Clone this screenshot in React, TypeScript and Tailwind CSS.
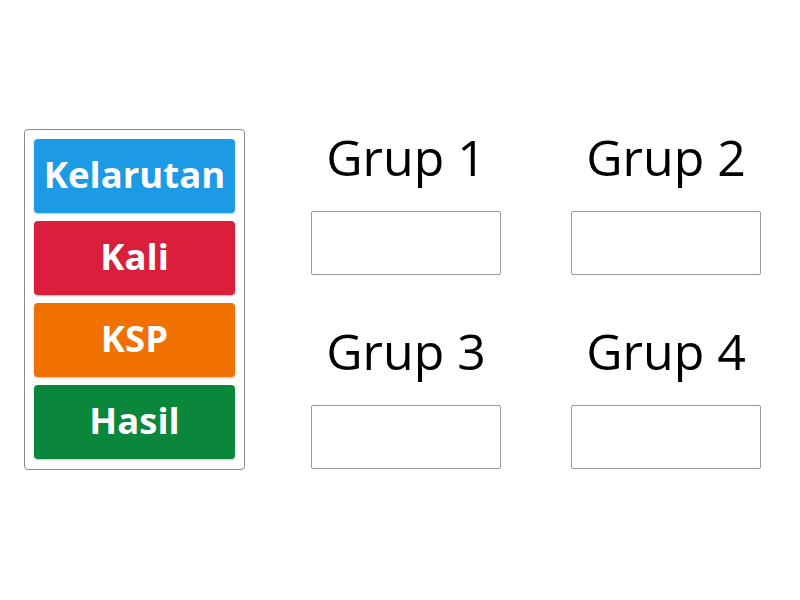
import React from 'react';

const ITEMS = [
  { label: 'Kelarutan', color: 'bg-[#1c9be4]' },
  { label: 'Kali', color: 'bg-[#d91f3b]' },
  { label: 'KSP', color: 'bg-[#f07000]' },
  { label: 'Hasil', color: 'bg-[#0b873c]' },
];

const GROUPS = ['Grup 1', 'Grup 2', 'Grup 3', 'Grup 4'];

export default function App() {
  return (
    <div
      className="w-[800px] h-[600px] bg-white flex items-start pt-[129px] pl-[24px]"
      style={{ fontFamily: '"Open Sans", sans-serif' }}
    >
      {/* Item tray */}
      <div className="w-[221px] h-[341px] border border-[#8a8a8a] rounded-[4px] p-[9px] flex flex-col gap-[8px]">
        {ITEMS.map((it) => (
          <div
            key={it.label}
            className={`${it.color} h-[74px] pb-[4px] rounded-[4px] shadow-[0_1px_2px_rgba(0,0,0,0.25)] flex items-center justify-center text-white font-bold text-[36.5px] leading-none`}
          >
            {it.label}
          </div>
        ))}
      </div>

      {/* Groups */}
      <div className="ml-[66px] grid grid-cols-[190px_190px] gap-x-[70px] gap-y-[48px]">
        {GROUPS.map((g) => (
          <div key={g} className="flex flex-col">
            <div className="h-[58px] leading-[56px] text-center text-[50px] text-black whitespace-nowrap">
              {g}
            </div>
            <div className="mt-[24px] h-[64px] border border-[#9a9a9a] rounded-[2px]" />
          </div>
        ))}
      </div>
    </div>
  );
}
